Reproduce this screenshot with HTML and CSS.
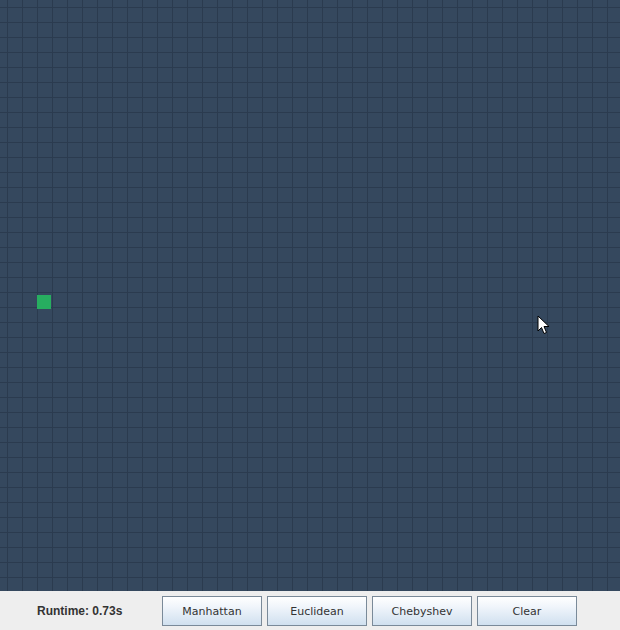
FILE: index.html
```html
<!DOCTYPE html>
<html>
<head>
<meta charset="utf-8">
<link rel="stylesheet" href="styles.css">
</head>
<body>
<div class="app">
  <div class="board">
    <div class="cell start"></div>
    <svg class="cursor" width="14" height="20" viewBox="0 0 14 20">
      <path d="M1 1 L1 16 L4.5 12.5 L7 18.5 L9.5 17.5 L7 11.5 L12 11.5 Z" fill="#fff" stroke="#000" stroke-width="1" stroke-linejoin="miter"/>
    </svg>
  </div>
  <div class="status">
    <span class="runtime">Runtime: 0.73s</span>
    <div class="buttons">
      <button class="btn">Manhattan</button>
      <button class="btn">Euclidean</button>
      <button class="btn">Chebyshev</button>
      <button class="btn">Clear</button>
    </div>
  </div>
</div>
</body>
</html>
```
FILE: styles.css
```css
html, body {
  margin: 0;
  padding: 0;
  width: 620px;
  height: 630px;
  overflow: hidden;
  background: #eeeeee;
}
.app {
  display: flex;
  flex-direction: column;
  width: 620px;
  height: 630px;
}
.board {
  position: relative;
  height: 591px;
  flex: none;
  background-color: #35485e;
  background-image:
    linear-gradient(to right, #2b3b4f 1px, transparent 1px),
    linear-gradient(to bottom, #2b3b4f 1px, transparent 1px);
  background-size: 15px 15px;
  background-position: 7px 7px;
}
.cell {
  position: absolute;
  width: 14px;
  height: 14px;
}
.start {
  left: 37px;
  top: 295px;
  background: #27ae60;
}
.cursor {
  position: absolute;
  left: 537px;
  top: 315px;
}
.status {
  flex: 1;
  display: flex;
  align-items: center;
  padding: 5px 0 4px 37px;
  box-sizing: border-box;
  background: #eeeeee;
}
.runtime {
  width: 125px;
  font-family: "Liberation Sans", Arial, sans-serif;
  font-weight: bold;
  font-size: 12px;
  color: #333333;
}
.buttons {
  display: flex;
  gap: 5px;
}
.btn {
  width: 100px;
  height: 30px;
  margin: 0;
  padding: 0;
  border: 1px solid #7a8a99;
  border-radius: 0;
  background: linear-gradient(to bottom, #ffffff 0%, #f0f5fb 35%, #d0e0ef 100%);
  font-family: "DejaVu Sans", Tahoma, sans-serif;
  font-size: 11px;
  color: #333333;
}
```
